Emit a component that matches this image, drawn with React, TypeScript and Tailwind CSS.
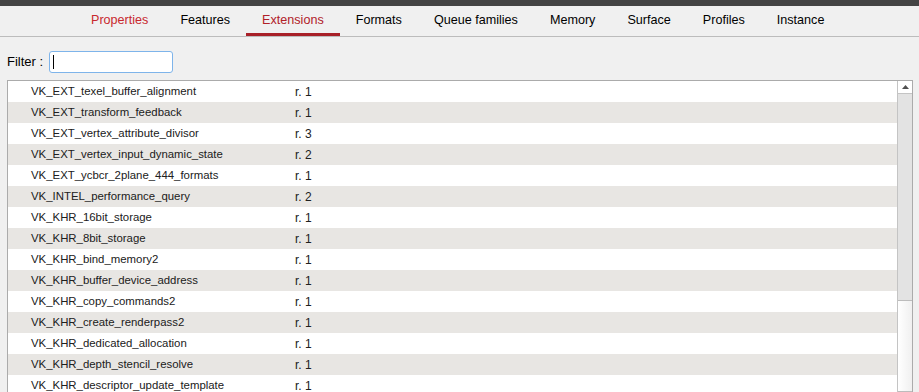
import React from "react";

const tabs = [
  "Properties",
  "Features",
  "Extensions",
  "Formats",
  "Queue families",
  "Memory",
  "Surface",
  "Profiles",
  "Instance",
];

const rows: [string, string][] = [
  ["VK_EXT_texel_buffer_alignment", "r. 1"],
  ["VK_EXT_transform_feedback", "r. 1"],
  ["VK_EXT_vertex_attribute_divisor", "r. 3"],
  ["VK_EXT_vertex_input_dynamic_state", "r. 2"],
  ["VK_EXT_ycbcr_2plane_444_formats", "r. 1"],
  ["VK_INTEL_performance_query", "r. 2"],
  ["VK_KHR_16bit_storage", "r. 1"],
  ["VK_KHR_8bit_storage", "r. 1"],
  ["VK_KHR_bind_memory2", "r. 1"],
  ["VK_KHR_buffer_device_address", "r. 1"],
  ["VK_KHR_copy_commands2", "r. 1"],
  ["VK_KHR_create_renderpass2", "r. 1"],
  ["VK_KHR_dedicated_allocation", "r. 1"],
  ["VK_KHR_depth_stencil_resolve", "r. 1"],
  ["VK_KHR_descriptor_update_template", "r. 1"],
];

export default function App() {
  return (
    <div
      className="w-[919px] h-[392px] overflow-hidden bg-[#f0f0f0] flex flex-col"
      style={{ fontFamily: '"Liberation Sans", Arial, sans-serif' }}
    >
      <div className="h-[6px] bg-[#444444] shrink-0" />
      <div className="h-[31px] shrink-0 border-b border-[#bcbcbc] flex items-stretch pl-[75px] text-[12.6px]">
        {tabs.map((t, i) => (
          <div
            key={t}
            className={
              "px-[16px] flex items-center pt-[1px] border-b-[3px] " +
              (i === 2
                ? "border-[#a82028] text-[#b02028]"
                : i === 0
                ? "border-transparent text-[#c8282e]"
                : "border-transparent text-black")
            }
          >
            {t}
          </div>
        ))}
      </div>
      <div className="h-[43px] shrink-0 flex items-center pl-[7px] pt-[6px] text-[13px] text-black">
        <span>Filter :</span>
        <div className="ml-[6px] w-[124px] h-[22px] border border-[#7eb4ea] rounded-[3px] bg-white flex items-center pl-[3px]">
          <div className="w-[1px] h-[14px] bg-black" />
        </div>
      </div>
      <div className="ml-[7px] w-[906px] flex-1 border border-[#ababab] bg-white flex">
        <div className="flex-1 flex flex-col text-[11.4px] text-[#202020]">
          {rows.map(([n, r], i) => (
            <div
              key={n}
              className={
                "h-[21px] shrink-0 flex items-center " +
                (i % 2 === 1 ? "bg-[#e8e6e3]" : "bg-white")
              }
            >
              <span className="pl-[23px] w-[287px]">{n}</span>
              <span className="text-[12px]">{r}</span>
            </div>
          ))}
        </div>
        <div className="w-[15px] border-l border-[#c4c4c4] bg-[#e3e3e3] flex flex-col">
          <div className="h-[13px] bg-white border-b border-[#c4c4c4] flex items-center justify-center">
            <svg width="7" height="4" viewBox="0 0 7 4">
              <path d="M0 4 L3.5 0 L7 4 Z" fill="#505050" />
            </svg>
          </div>
          <div className="h-[206px]" />
          <div className="flex-1 bg-gradient-to-r from-white to-[#f0f0f0] border-y border-[#bcbcbc]" />
          <div className="h-[4px]" />
        </div>
      </div>
    </div>
  );
}
